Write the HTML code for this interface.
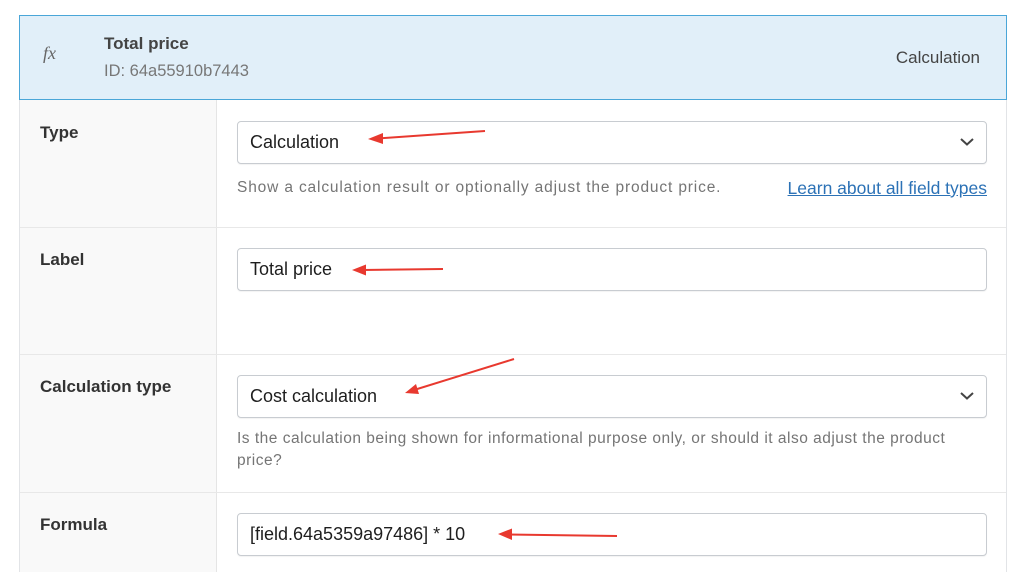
<!DOCTYPE html>
<html><head><meta charset="utf-8"><style>
*{box-sizing:border-box;margin:0;padding:0}
html,body{width:1024px;height:572px;overflow:hidden}
body{background:#fff;font-family:"Liberation Sans",sans-serif;position:relative;color:#1e1e1e}
.box{position:absolute;left:19px;top:15px;width:988px;height:557px;border-left:1px solid #e2e4e7;border-right:1px solid #e2e4e7}
.hdr{position:absolute;left:19px;top:15px;width:988px;height:85px;background:#e1eff9;border:1px solid #4aa6d8}
.left{position:absolute;left:20px;top:100px;width:197px;height:472px;background:#f9f9f9;border-right:1px solid #e5e5e5}
.sep{position:absolute;left:20px;width:986px;height:1px;background:#e8e8e8}
.lbl{position:absolute;left:40px;font-weight:bold;font-size:17px;color:#333}
.inp{position:absolute;left:237px;width:750px;height:43px;border:1px solid #c8ccd1;border-radius:4px;background:#fff;font-size:18px;padding:10px 0 0 12px;box-shadow:0 1px 1px rgba(0,0,0,.05)}
.chev{position:absolute;right:11px;top:14px}
.hint{position:absolute;left:237px;font-size:15.5px;letter-spacing:0.5px;color:#757575;line-height:22px}
</style></head><body>
<div class="box"></div>
<div class="hdr"></div>
<div style="position:absolute;left:43px;top:43px;font-family:'Liberation Serif',serif;font-style:italic;font-size:18px;color:#666">fx</div>
<div style="position:absolute;left:104px;top:34px;font-weight:bold;font-size:17px;color:#444">Total price</div>
<div style="position:absolute;left:104px;top:62px;font-size:16.5px;color:#777">ID: 64a55910b7443</div>
<div style="position:absolute;right:44px;top:48px;font-size:17px;color:#444">Calculation</div>
<div class="left"></div>
<div class="sep" style="top:227px"></div>
<div class="sep" style="top:354px"></div>
<div class="sep" style="top:492px"></div>
<div class="lbl" style="top:123px">Type</div>
<div class="lbl" style="top:250px">Label</div>
<div class="lbl" style="top:377px">Calculation type</div>
<div class="lbl" style="top:515px">Formula</div>
<div class="inp" style="top:121px">Calculation<svg class="chev" width="16" height="11" viewBox="0 0 16 11"><path d="M2 3L8 8.5L14 3" fill="none" stroke="#444" stroke-width="2"/></svg></div>
<div class="hint" style="top:177px;letter-spacing:0.85px">Show a calculation result or optionally adjust the product price.</div>
<div style="position:absolute;right:37px;top:178px;font-size:17.5px;color:#2c72b6;text-decoration:underline">Learn about all field types</div>
<div class="inp" style="top:248px">Total price</div>
<div class="inp" style="top:375px">Cost calculation<svg class="chev" width="16" height="11" viewBox="0 0 16 11"><path d="M2 3L8 8.5L14 3" fill="none" stroke="#444" stroke-width="2"/></svg></div>
<div class="hint" style="top:428px;width:740px">Is the calculation being shown for informational purpose only, or should it also adjust the product price?</div>
<div class="inp" style="top:513px">[field.64a5359a97486] * 10</div>
<svg style="position:absolute;left:0;top:0" width="1024" height="572">
<g stroke="#e8392f" stroke-width="2" fill="#e8392f">
<line x1="485" y1="131" x2="378" y2="138.5"/><polygon points="368,139 383,133 383,144" stroke="none"/>
<line x1="443" y1="269" x2="362" y2="270"/><polygon points="352,270 366,264.5 366,275.5" stroke="none"/>
<line x1="514" y1="359" x2="414" y2="390"/><polygon points="405,393 416,384 419,394" stroke="none"/>
<line x1="617" y1="536" x2="508" y2="534.5"/><polygon points="498,534 512,528.5 512,540" stroke="none"/>
</g></svg>
</body></html>
